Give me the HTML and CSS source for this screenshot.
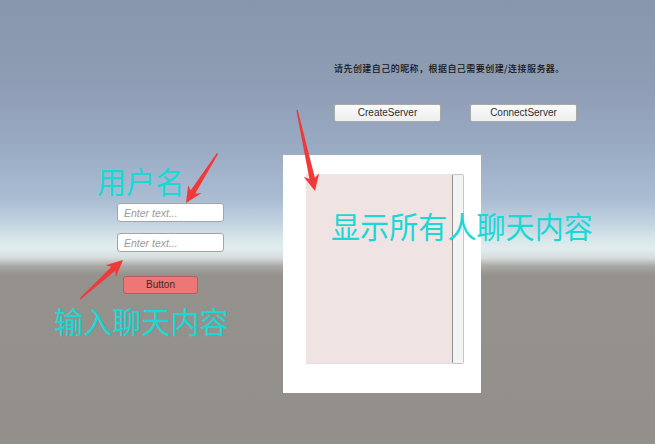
FILE: index.html
```html
<!DOCTYPE html>
<html lang="zh-CN">
<head>
<meta charset="utf-8">
<title>Chat</title>
<link rel="stylesheet" href="styles.css">
</head>
<body>
<div class="screen">
  <div class="left">
    <div class="label label-user">用户名</div>
    <input class="field field-first" type="text" placeholder="Enter text...">
    <input class="field field-second" type="text" placeholder="Enter text...">
    <button class="send">Button</button>
    <div class="label label-input">输入聊天内容</div>
  </div>
  <div class="right">
    <p class="hint">请先创建自己的昵称，根据自己需要创建/连接服务器。</p>
    <div class="server-row">
      <button class="server-btn">CreateServer</button>
      <button class="server-btn">ConnectServer</button>
    </div>
    <div class="chat-panel">
      <div class="chat-view"></div>
      <div class="chat-scroll"></div>
    </div>
  </div>
  <div class="label label-chat">显示所有人聊天内容</div>
  <svg class="arrows" width="655" height="444" viewBox="0 0 655 444" xmlns="http://www.w3.org/2000/svg">
    <polygon class="arrow" points="0,-0.7 45.7,-2.8 42.2,-7.8 58.7,0 42.2,7.8 45.7,2.8 0,0.7" transform="translate(217.5 153.5) rotate(122.5)"/>
    <polygon class="arrow" points="0,-0.7 45,-2.8 41.5,-7.8 58,0 41.5,7.8 45,2.8 0,0.7" transform="translate(80 299) rotate(-42.2)"/>
    <polygon class="arrow" points="0,-0.7 70,-2.8 66.5,-8 83,0 66.5,8 70,2.8 0,0.7" transform="translate(297 110) rotate(77.5)"/>
  </svg>
</div>
</body>
</html>
```

FILE: styles.css
```css
html, body {
  margin: 0;
  padding: 0;
}

body {
  width: 655px;
  height: 444px;
  overflow: hidden;
  font-family: "Liberation Sans", Arial, sans-serif;
}

.screen {
  position: relative;
  width: 655px;
  height: 444px;
  display: flex;
  background: linear-gradient(to bottom,
    #8796ad 0px,
    #8e9cb4 80px,
    #9aabc4 150px,
    #abbdd3 200px,
    #c4d5e1 225px,
    #dae7ea 240px,
    #e1ecec 250px,
    #d5dcdc 258px,
    #aaa9a6 266px,
    #95918c 275px,
    #938f8a 444px);
}

.left {
  flex: none;
  width: 283px;
  display: flex;
  flex-direction: column;
  align-items: flex-start;
  padding-top: 165px;
  box-sizing: border-box;
}

.label {
  font-family: "Noto Sans CJK SC", "Noto Sans CJK TC", sans-serif;
  font-size: 30px;
  line-height: 30px;
  height: 30px;
  color: #1ad8d6;
  white-space: nowrap;
  transform: scaleX(0.97);
  transform-origin: left center;
}

.label-user {
  margin-left: 97px;
}

.field {
  display: block;
  box-sizing: border-box;
  width: 107px;
  height: 19px;
  margin: 0 0 0 117px;
  padding: 0 6px;
  border: 1px solid #a4a4a4;
  border-radius: 3px;
  background: #ffffff;
  font-family: "Liberation Sans", Arial, sans-serif;
  font-size: 10.5px;
  font-style: italic;
  color: #333;
  outline: none;
}

.field::placeholder {
  color: #9a9a9a;
  font-style: italic;
}

.field-first {
  margin-top: 8px;
}

.field-second {
  margin-top: 11px;
}

.send {
  display: block;
  box-sizing: border-box;
  width: 75px;
  height: 18px;
  margin: 24px 0 0 123px;
  padding: 0;
  border: 1px solid #b45e5e;
  border-radius: 3px;
  background: #ed7676;
  color: #3c2b2b;
  font-family: "Liberation Sans", Arial, sans-serif;
  font-size: 10px;
  line-height: 16px;
}

.label-input {
  margin-top: 11px;
  margin-left: 54px;
}

.right {
  flex: none;
  width: 372px;
  display: flex;
  flex-direction: column;
  align-items: flex-start;
  padding-top: 63px;
  box-sizing: border-box;
}

.hint {
  margin: 0 0 0 51px;
  font-family: "Noto Sans CJK SC", "Noto Sans CJK TC", sans-serif;
  font-size: 9px;
  font-weight: 500;
  line-height: 12px;
  height: 12px;
  letter-spacing: 0.45px;
  color: #151515;
  white-space: nowrap;
}

.server-row {
  display: flex;
  gap: 29px;
  margin: 29px 0 0 51px;
}

.server-btn {
  box-sizing: border-box;
  width: 107px;
  height: 18px;
  padding: 0;
  border: 1px solid #a9a9a9;
  border-radius: 2px;
  background: linear-gradient(to bottom, #fbfbfb, #eeeeee);
  color: #2e2e2e;
  font-family: "Liberation Sans", Arial, sans-serif;
  font-size: 10px;
  line-height: 16px;
}

.chat-panel {
  box-sizing: border-box;
  width: 198px;
  height: 238px;
  margin-top: 33px;
  padding: 19px 17px 29px 23px;
  background: #ffffff;
  display: flex;
}

.chat-view {
  flex: 1;
  background: #efe3e3;
  border-bottom: 1px solid #e3dcdc;
}

.chat-scroll {
  flex: none;
  box-sizing: border-box;
  width: 12px;
  background: #f3f3f3;
  border: 1px solid #c6c6c6;
  border-left-color: #8e8e8e;
  border-radius: 2px;
}

.label-chat {
  position: absolute;
  left: 331px;
  top: 210px;
}

.arrows {
  position: absolute;
  left: 0;
  top: 0;
  pointer-events: none;
}

.arrow {
  fill: #f03a3a;
}
```
